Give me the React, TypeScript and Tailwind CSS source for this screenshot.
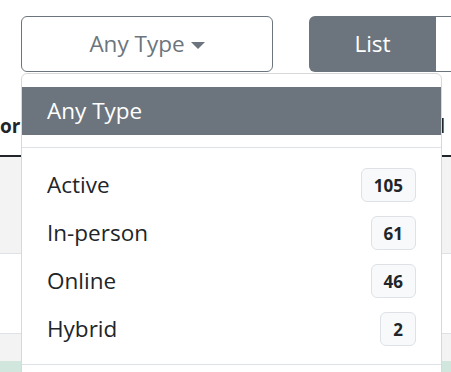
import React from "react";

const types = [
  { label: "Active", count: 105 },
  { label: "In-person", count: 61 },
  { label: "Online", count: 46 },
  { label: "Hybrid", count: 2 },
];

function TypeMenu() {
  return (
    <div className="absolute left-[21px] top-[73px] h-[320px] w-[421px] rounded-[6px] border border-[#d6d8da] bg-white pt-[13px]">
      <div className="flex h-[48px] items-center bg-[#6c757d] pl-[25px] text-white">
        Any Type
      </div>
      <div className="mb-[13px] mt-[12px] h-px bg-[#dee2e6]" />
      {types.map((t) => (
        <div
          key={t.label}
          className="flex h-[48px] items-center justify-between pl-[25px] pr-[25px]"
        >
          <span>{t.label}</span>
          <span className="flex h-[34px] shrink-0 items-center rounded-[6px] border border-[#dee2e6] bg-[#f8f9fa] px-[12px] text-[17px] leading-none font-bold">
            {t.count}
          </span>
        </div>
      ))}
      <div className="mt-[11px] h-px bg-[#dee2e6]" />
    </div>
  );
}

export default function App() {
  return (
    <div className="relative h-[372px] w-[451px] overflow-hidden bg-white font-['Open_Sans',sans-serif] text-[22.5px] text-[#212529]">
      <div className="flex h-[72px] items-start pl-[21px] pt-[16px]">
        <button className="flex h-[56px] w-[252px] shrink-0 items-center justify-center rounded-[6px] border border-[#6c757d] text-[#6c757d]">
          Any Type
          <span className="ml-[6px] mt-[2px] h-0 w-0 border-x-[7px] border-t-[7px] border-x-transparent border-t-[#6c757d]" />
        </button>
        <button className="ml-[36px] flex h-[56px] w-[127px] shrink-0 items-center justify-center rounded-l-[6px] bg-[#6c757d] text-white">
          List
        </button>
        <button className="h-[56px] w-[60px] shrink-0 border border-l-0 border-[#6c757d]" />
      </div>

      <div className="flex h-[85px] items-end justify-between border-b-2 border-[#212529] pb-[15px] text-[19px] font-bold">
        <div>or</div>
        <div className="mr-[6px]">Total</div>
      </div>
      <div className="h-[97px] border-b border-[#dee2e6] bg-[#f3f3f3]" />
      <div className="h-[80px] border-b border-[#dee2e6] bg-white" />
      <div className="h-[27px] bg-[#f3f3f3]" />
      <div className="h-[20px] bg-[#d1e7dd]" />

      <TypeMenu />
    </div>
  );
}
